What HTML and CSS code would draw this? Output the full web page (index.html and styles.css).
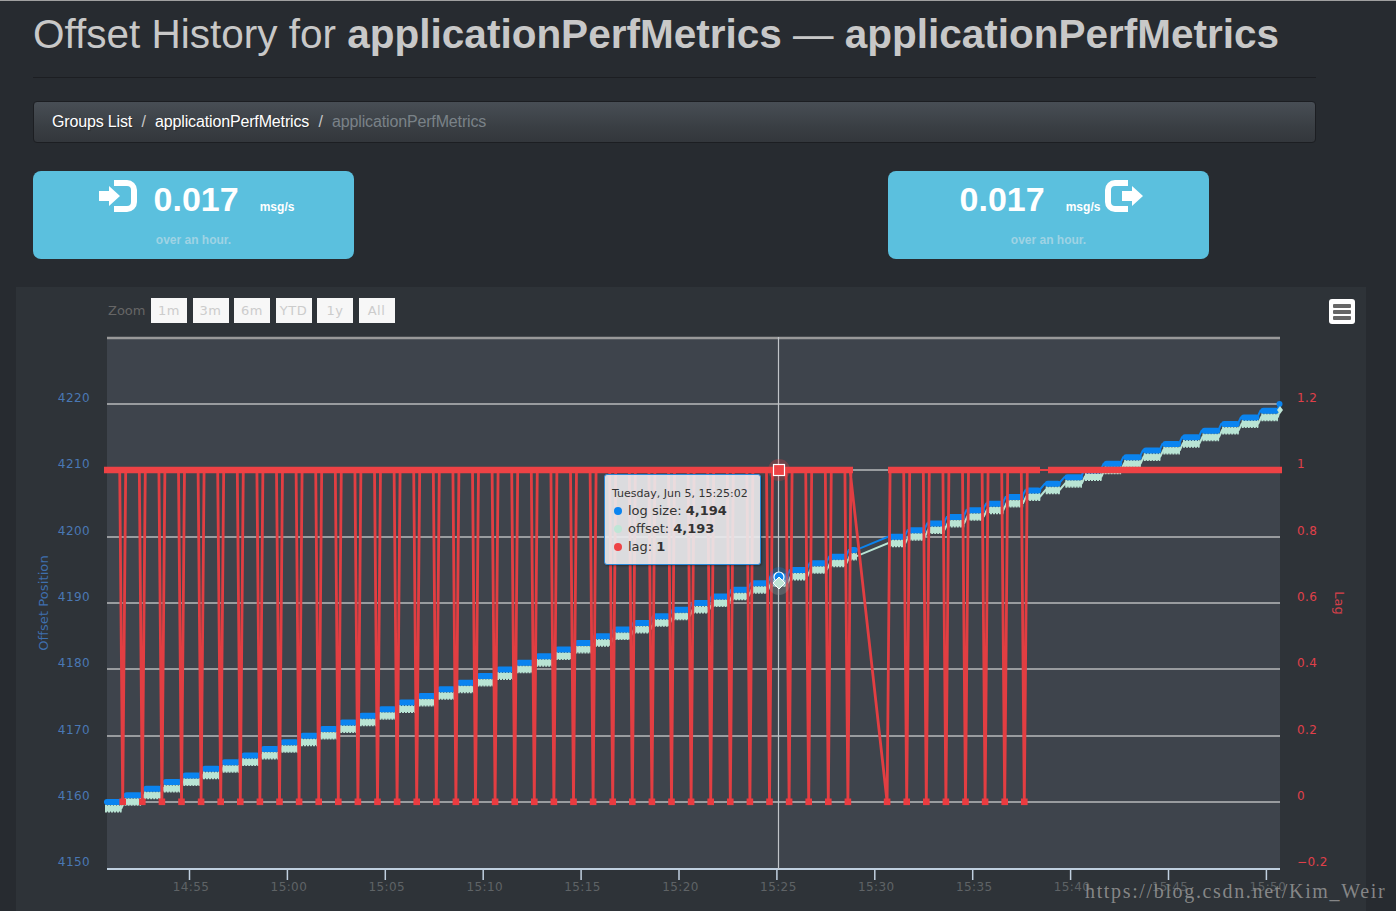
FILE: index.html
```html
<!DOCTYPE html>
<html lang="en">
<head>
<meta charset="utf-8">
<title>Offset History</title>
<link rel="stylesheet" href="styles.css">
</head>
<body>
<div class="topline"></div>
<main class="container">
  <h1 class="title">Offset History for <b>applicationPerfMetrics</b> — <b>applicationPerfMetrics</b></h1>
  <nav class="breadcrumb">
    <a>Groups List</a><span class="sep">/</span><a>applicationPerfMetrics</a><span class="sep">/</span><span class="active">applicationPerfMetrics</span>
  </nav>
  <div class="cards">
    <section class="card">
      <div class="rate">
        <svg class="rate-icon" viewBox="0 0 38 32" aria-hidden="true"><path class="icon-stroke" d="M15 3H28a7 7 0 0 1 7 7V22a7 7 0 0 1-7 7H15"/><path class="icon-fill" d="M0 11H10V6L21 16 10 26V21H0Z"/></svg>
        <span class="num num-in">0.017</span><span class="unit">msg/s</span>
      </div>
      <div class="note">over an hour.</div>
    </section>
    <section class="card">
      <div class="rate">
        <span class="num">0.017</span><span class="unit unit-tight">msg/s</span>
        <svg class="rate-icon" viewBox="0 0 38 32" aria-hidden="true"><path class="icon-stroke" d="M23 3H10a7 7 0 0 0-7 7V22a7 7 0 0 0 7 7H23"/><path class="icon-fill" d="M17 11H27V6L38 16 27 26V21H17Z"/></svg>
      </div>
      <div class="note">over an hour.</div>
    </section>
  </div>
</main>
<section class="panel">
  <div class="toolbar">
    <span class="zoom-label">Zoom</span>
    <button class="zbtn">1m</button><button class="zbtn">3m</button><button class="zbtn">6m</button><button class="zbtn">YTD</button><button class="zbtn">1y</button><button class="zbtn">All</button>
    <button class="menu" aria-label="Chart menu"><i></i><i></i><i></i></button>
  </div>
  <svg id="chart" class="chart" viewBox="16 331 1350 580" xmlns="http://www.w3.org/2000/svg"></svg>
  <div class="tooltip">
    <div class="tt-head">Tuesday, Jun 5, 15:25:02</div>
    <div class="tt-row"><i class="dot dot-blue"></i>log size: <b>4,194</b></div>
    <div class="tt-row"><i class="dot dot-mint"></i>offset: <b>4,193</b></div>
    <div class="tt-row"><i class="dot dot-red"></i>lag: <b>1</b></div>
  </div>
  <div class="watermark">https://blog.csdn.net/Kim_Weir</div>
</section>
<script src="chart.js"></script>
</body>
</html>
```
FILE: styles.css
```css
* { box-sizing: border-box; }
html, body { margin: 0; height: 911px; overflow: hidden; }
body { background: #272b30; font-family: "Liberation Sans", Arial, sans-serif; color: #c8c8c8; }
.topline { height: 1px; background: #a0a0a0; }
.container { width: 1283px; margin-left: 33px; height: 286px; }
.title { margin: 0; height: 77px; padding: 10px 0 0 0; border-bottom: 1px solid #1c1e22; font-size: 40.5px; line-height: 46px; font-weight: 400; color: #c8c8c8; white-space: nowrap; }
.title b { font-weight: 700; }
.breadcrumb { display: flex; align-items: center; margin-top: 23px; height: 42px; padding: 0 18px; border: 1px solid #1c1e22; border-radius: 4px; background: linear-gradient(#484e55, #3a3f44 60%, #33373c); font-size: 16px; letter-spacing: -0.15px; white-space: nowrap; }
.breadcrumb a { color: #fff; text-shadow: 1px 1px 1px rgba(0,0,0,.3); }
.breadcrumb .sep { color: #c8c8c8; padding: 0 9.3px; }
.breadcrumb .active { color: #7a8288; }
.cards { display: flex; justify-content: space-between; width: 1176px; margin-top: 28px; }
.card { width: 321px; height: 88px; border-radius: 8px; background: #5bc0de; color: #fff; text-align: center; font-weight: 700; }
.rate { display: flex; justify-content: center; align-items: flex-start; height: 58px; padding: 9px 0 0 6px; }
.rate-icon { width: 38px; height: 32px; }
.icon-stroke { fill: none; stroke: #fff; stroke-width: 6; }
.icon-fill { fill: #fff; }
.num { font-size: 34px; line-height: 38px; margin-right: 21px; }
.num-in { margin-left: 17px; }
.unit { font-size: 12px; line-height: 14px; margin-top: 20px; }
.unit-tight { margin-right: 5px; }
.note { font-size: 12px; line-height: 14px; margin-top: 4px; color: #9fd3e4; }
.panel { position: relative; width: 1350px; height: 624px; margin-left: 16px; background: #2e3338; }
.toolbar { display: flex; align-items: flex-start; height: 44px; padding: 11px 11px 0 92px; font-family: "DejaVu Sans", sans-serif; font-size: 13px; }
.zoom-label { color: #666; line-height: 25px; width: 43px; }
.zbtn { width: 36px; height: 25px; padding: 0; margin-right: 5.5px; border: 0; background: #f7f7f7; color: #ccc; font: inherit; letter-spacing: .5px; }
.menu { display: flex; flex-direction: column; justify-content: center; gap: 2px; width: 26px; height: 25px; margin: 1px 0 0 auto; padding: 0 4px; border: 0; border-radius: 3px; background: #fff; }
.menu i { display: block; height: 4px; border-radius: 1px; background: #666; }
.chart { display: block; width: 1350px; height: 580px; }
.chart text { font-family: "DejaVu Sans", sans-serif; font-size: 12px; letter-spacing: .4px; }
.chart .ltitle, .chart .rtitle { font-size: 13px; letter-spacing: .1px; }
.plot { fill: #3e444c; }
.grid { stroke: #b9babb; stroke-width: 1.6; }
.top { stroke: #999; stroke-width: 2.5; }
.axis { stroke: #c0d0e0; stroke-width: 2; }
.tick { stroke: #c0d0e0; stroke-width: 1.5; }
.cross { stroke: #c0c4c8; stroke-width: 1.2; }
.xlab { fill: #5f6366; text-anchor: middle; }
.llab { fill: #4a78b4; text-anchor: end; }
.rlab { fill: #e0404a; }
.ltitle { fill: #3e6fae; text-anchor: middle; }
.rtitle { fill: #d8404a; text-anchor: middle; }
.blue { stroke: #0a84f0; fill: none; }
.blue-bar { stroke-width: 6; stroke-linecap: round; }
.blue-link { stroke-width: 2; }
.mint { stroke: #b9e4d4; fill: none; }
.mint-bar { stroke-width: 6; }
.mint-dash { stroke-width: 8; stroke-dasharray: 2 1; }
.mint-link { stroke-width: 2; }
.red-bar { stroke: #ee4245; stroke-width: 6.5; fill: none; }
.red-thin { stroke: #e84044; stroke-width: 2; fill: none; }
.red-line { stroke: #e23e42; stroke-width: 2.8; fill: none; stroke-linejoin: round; }
.red-dot { fill: #ea3b40; }
.halo-red { fill: rgba(238,66,69,.28); }
.halo-blue { fill: rgba(10,132,240,.25); }
.halo-mint { fill: rgba(150,160,160,.3); }
.hover-red { fill: #ee4245; stroke: #fff; stroke-width: 1.2; }
.hover-blue { fill: #0a84f0; stroke: #fff; stroke-width: 1.2; }
.hover-mint { fill: #bfe6d6; stroke: #fff; stroke-width: 1; }
.end-blue { fill: #0a84f0; }
.end-mint { fill: #bfe6d6; }
.tooltip { position: absolute; left: 588px; top: 187px; width: 157px; height: 91px; padding: 12px 7px 0 7px; border: 1px solid #2a88d8; border-radius: 3px; background: rgba(236,236,238,.9); box-shadow: 1px 1px 2px rgba(0,0,0,.35); font-family: "DejaVu Sans", sans-serif; color: #333; }
.tt-head { font-size: 11px; line-height: 14px; margin-bottom: 1px; white-space: nowrap; }
.tt-row { display: flex; align-items: center; font-size: 13px; line-height: 18px; white-space: pre; }
.dot { width: 8px; height: 8px; border-radius: 50%; margin: 0 6px 0 2px; }
.dot-blue { background: #0a84f0; }
.dot-mint { background: #bfe6d6; }
.dot-red { background: #ee4245; }
.watermark { position: absolute; left: 1069px; top: 594px; font-family: "Liberation Serif", serif; font-size: 20px; letter-spacing: 1.65px; line-height: 20px; color: rgba(150,150,150,.85); white-space: nowrap; }
```
FILE: chart.js
```js
(function () {
  var NS = 'http://www.w3.org/2000/svg';
  var svg = document.getElementById('chart');
  function el(name, attrs, text) {
    var n = document.createElementNS(NS, name);
    for (var k in attrs) n.setAttribute(k, attrs[k]);
    if (text !== undefined) n.textContent = text;
    svg.appendChild(n);
    return n;
  }
  function line(c, x1, y1, x2, y2) { return el('line', { 'class': c, x1: x1, y1: y1, x2: x2, y2: y2 }); }

  var L = 107, R = 1280, T = 337, B = 869;
  el('rect', { 'class': 'plot', x: L, y: T, width: R - L, height: B - T });
  line('top', L, T + 1, R, T + 1);
  var gy = [404, 470, 537, 603, 669, 736, 802];
  gy.forEach(function (y) { line('grid', L, y, R, y); });
  line('axis', L, B, R, B);

  var ltxt = ['4220', '4210', '4200', '4190', '4180', '4170', '4160', '4150'];
  var rtxt = ['1.2', '1', '0.8', '0.6', '0.4', '0.2', '0', '−0.2'];
  gy.concat([B - 1]).forEach(function (y, i) {
    el('text', { 'class': 'llab', x: 90, y: y - 2 }, ltxt[i]);
    el('text', { 'class': 'rlab', x: 1297, y: y - 2 }, rtxt[i]);
  });
  ['14:55', '15:00', '15:05', '15:10', '15:15', '15:20', '15:25', '15:30', '15:35', '15:40', '15:45', '15:50'].forEach(function (t, i) {
    var x = 189.5 + i * 97.9;
    line('tick', x, B, x, 880);
    el('text', { 'class': 'xlab', x: x + 1.5, y: 891 }, t);
  });
  el('text', { 'class': 'ltitle', transform: 'translate(48 603) rotate(-90)' }, 'Offset Position');
  el('text', { 'class': 'rtitle', transform: 'translate(1335 603) rotate(90)' }, 'Lag');

  line('cross', 778.5, T, 778.5, B);

  // Offset / log size staircase
  var STEP = 19.6, DY = 6.63;
  function sx(n) { return 104 + n * STEP; }
  function sy(n) { return 802 - n * DY; }
  var bluePts = [], mintPts = [], bars = [];
  for (var n = 0; n < 60; n++) {
    if (n === 39) continue;
    var w = n === 38 ? 7 : (n === 47 || n === 48) ? 14 : 16.5;
    bars.push([sx(n), sy(n), w]);
    bluePts.push(sx(n) + ',' + sy(n), (sx(n) + w) + ',' + sy(n));
    mintPts.push((sx(n) + 1) + ',' + (sy(n) + 6), (sx(n) + 1 + w) + ',' + (sy(n) + 6));
  }
  bluePts.push('1280,404');
  mintPts.push('1280,410');
  el('polyline', { 'class': 'blue blue-link', points: bluePts.join(' ') });
  el('polyline', { 'class': 'mint mint-link', points: mintPts.join(' ') });
  bars.forEach(function (b) {
    line('mint mint-bar', b[0] + 1, b[1] + 6.5, b[0] + 1 + b[2], b[1] + 6.5);
    line('mint mint-dash', b[0] + 1, b[1] + 6.5, b[0] + 1 + b[2], b[1] + 6.5);
    line('blue blue-bar', b[0] + 3, b[1], b[0] + b[2] - 1, b[1]);
  });
  el('circle', { 'class': 'end-blue', cx: 1279.5, cy: 404, r: 3 });
  el('polygon', { 'class': 'end-mint', points: '1280,406 1283,410 1280,414 1277,410' });

  // Lag series
  var d = '';
  var px = [];
  for (var i = 0; i <= 46; i++) { if (i !== 38) px.push(122.7 + i * 19.6); }
  px.forEach(function (x) {
    if (Math.abs(x - 887.1) < 1) {
      d += 'M850 470L' + x + ' 802L' + (x + 3) + ' 470';
    } else {
      d += 'M' + (x - 3) + ' 470L' + x + ' 802L' + (x + 3) + ' 470';
    }
  });
  el('path', { 'class': 'red-line', d: d });
  line('red-bar', 104, 470, 853, 470);
  line('red-bar', 888, 470, 1040, 470);
  line('red-thin', 1040, 470, 1048, 470);
  line('red-bar', 1048, 470, 1282, 470);
  px.forEach(function (x) {
    el('rect', { 'class': 'red-dot', x: x - 3.3, y: 798.5, width: 6.6, height: 6.6 });
  });

  // Hover markers
  el('circle', { 'class': 'halo-red', cx: 779, cy: 470, r: 11 });
  el('rect', { 'class': 'hover-red', x: 773.5, y: 464.5, width: 11, height: 11 });
  el('circle', { 'class': 'halo-mint', cx: 779, cy: 584, r: 11 });
  el('circle', { 'class': 'halo-blue', cx: 779, cy: 577, r: 10 });
  el('circle', { 'class': 'hover-blue', cx: 779, cy: 577, r: 5 });
  el('polygon', { 'class': 'hover-mint', points: '779,577 785,583 779,589 773,583' });
})();
```
